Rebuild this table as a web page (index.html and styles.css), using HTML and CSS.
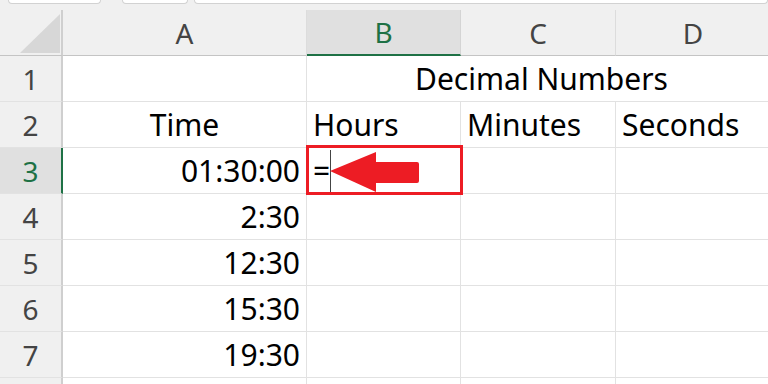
FILE: index.html
```html
<!DOCTYPE html>
<html lang="en">
<head>
  <meta charset="UTF-8">
  <title>Book1 - Excel</title>
  <link rel="stylesheet" href="styles.css">
</head>
<body>
  <div class="toolbar">
    <span class="field name-box"></span>
    <span class="field fx-box"></span>
    <span class="field formula"></span>
  </div>

  <div class="sheet">
    <!-- column headers -->
    <div class="hd corner"></div>
    <div class="hd col">A</div>
    <div class="hd col active">B</div>
    <div class="hd col">C</div>
    <div class="hd col">D</div>

    <!-- row 1 -->
    <div class="hd row">1</div>
    <div class="cell"></div>
    <div class="cell title">Decimal Numbers</div>

    <!-- row 2 -->
    <div class="hd row">2</div>
    <div class="cell center">Time</div>
    <div class="cell">Hours</div>
    <div class="cell">Minutes</div>
    <div class="cell">Seconds</div>

    <!-- row 3 -->
    <div class="hd row active">3</div>
    <div class="cell num">01:30:00</div>
    <div class="cell editing">=<span class="caret"></span>
      <span class="callout"></span>
      <svg class="arrow" width="154" height="46" viewBox="0 0 154 46">
        <path d="M23 23 L69 4 L69 14 L110 14 Q112 14 112 16 L112 33 Q112 35 110 35 L69 35 L69 44 Z" fill="#ed1c24"/>
      </svg>
    </div>
    <div class="cell"></div>
    <div class="cell"></div>

    <!-- row 4 -->
    <div class="hd row">4</div>
    <div class="cell num">2:30</div>
    <div class="cell"></div>
    <div class="cell"></div>
    <div class="cell"></div>

    <!-- row 5 -->
    <div class="hd row">5</div>
    <div class="cell num">12:30</div>
    <div class="cell"></div>
    <div class="cell"></div>
    <div class="cell"></div>

    <!-- row 6 -->
    <div class="hd row">6</div>
    <div class="cell num">15:30</div>
    <div class="cell"></div>
    <div class="cell"></div>
    <div class="cell"></div>

    <!-- row 7 -->
    <div class="hd row">7</div>
    <div class="cell num">19:30</div>
    <div class="cell"></div>
    <div class="cell"></div>
    <div class="cell"></div>

    <!-- next row, only its top edge shows -->
    <div class="hd row"></div>
    <div class="cell"></div>
    <div class="cell"></div>
    <div class="cell"></div>
    <div class="cell"></div>
  </div>
</body>
</html>
```

FILE: styles.css
```css
* {
  box-sizing: border-box;
}

body {
  margin: 0;
  width: 768px;
  height: 384px;
  overflow: hidden;
  background: #f0f0f0;
  font-family: "Noto Sans", sans-serif;
  color: #000;
}

/* strip of the formula bar above the grid */
.toolbar {
  display: flex;
  height: 10px;
  padding-left: 8px;
}

.field {
  height: 4px;
  background: #fff;
  border: 1px solid #d2d2d2;
  border-top: none;
  border-radius: 0 0 4px 4px;
}

.name-box {
  width: 93px;
}

.fx-box {
  width: 66px;
  margin-left: 21px;
}

.formula {
  flex: 1;
  margin-left: 6px;
}

/* grid */
.sheet {
  display: grid;
  grid-template-columns: 63px 244px 154px 155px 155px;
  grid-template-rows: 46px repeat(8, 46px);
  width: 771px;
  height: 374px;
  overflow: hidden;
}

.hd {
  display: flex;
  align-items: center;
  justify-content: center;
  background: #f0f0f0;
  color: #444;
  font-size: 28px;
}

.hd.col {
  border-bottom: 1px solid #c4c4c4;
  border-right: 1px solid #dcdcdc;
}

.hd.col.active {
  background: #e0e0e0;
  color: #1e7145;
  border-bottom: 2px solid #1e7145;
  border-right-color: #d4d4d4;
}

.hd.row {
  border-right: 2px solid #cfcfcf;
  border-bottom: 1px solid #e2e2e2;
}

.hd.row.active {
  background: #e0e0e0;
  color: #1e7145;
  border-right-color: #1e7145;
}

.corner {
  position: relative;
  border-bottom: 1px solid #c4c4c4;
  border-right: 2px solid #cfcfcf;
}

.corner::after {
  content: "";
  position: absolute;
  left: 20px;
  top: 4px;
  width: 40px;
  height: 39px;
  background: #d7d7d7;
  clip-path: polygon(100% 0, 100% 100%, 0 100%);
}

.cell {
  position: relative;
  display: flex;
  align-items: flex-end;
  padding: 0 6px 2px;
  background: #fff;
  border-right: 1px solid #e2e2e2;
  border-bottom: 1px solid #e2e2e2;
  font-size: 30px;
  line-height: 41px;
  white-space: nowrap;
}

.cell.center {
  justify-content: center;
}

.cell.num {
  justify-content: flex-end;
}

.cell.title {
  grid-column: span 3;
  justify-content: center;
  padding-right: 0;
}

/* cell being edited */
.editing {
  overflow: visible;
  z-index: 1;
}

.caret {
  position: absolute;
  left: 23px;
  top: 2px;
  width: 1px;
  height: 43px;
  background: #444;
}

.callout {
  position: absolute;
  left: -1px;
  top: -3px;
  width: 157px;
  height: 50px;
  border: 3px solid #ed1c24;
}

.arrow {
  position: absolute;
  left: 0;
  top: 0;
}
```
